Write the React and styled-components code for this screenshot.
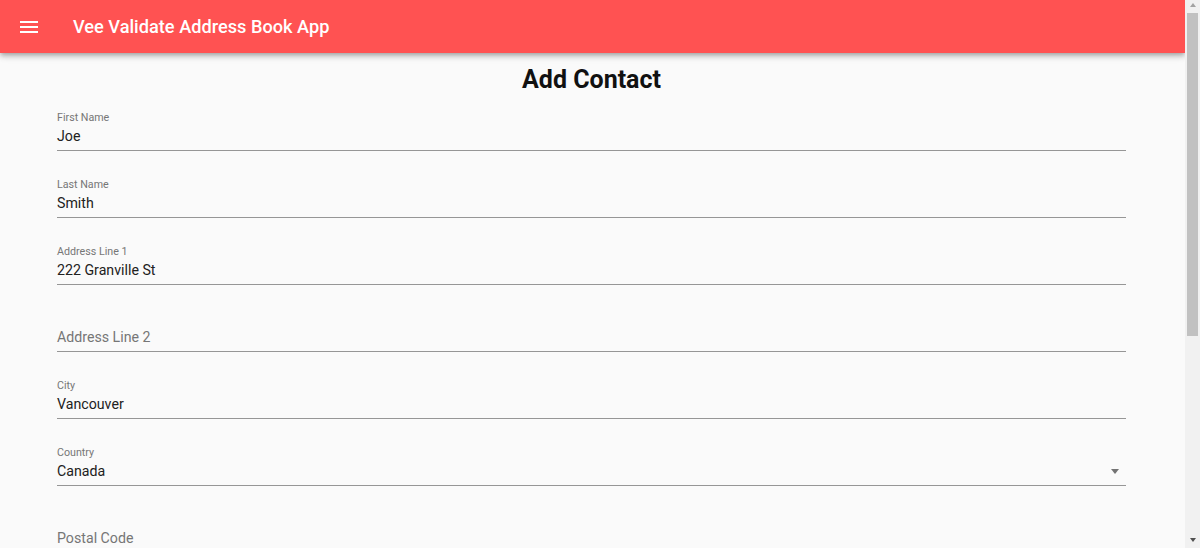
import React from "react";
import styled, { createGlobalStyle } from "styled-components";

const GlobalStyle = createGlobalStyle`
  html, body {
    margin: 0;
    padding: 0;
    background: #fafafa;
    overflow: hidden;
    font-family: Roboto, "Noto Sans", "Liberation Sans", sans-serif;
  }
  * { box-sizing: border-box; }
`;

const Window = styled.div`
  display: flex;
  height: 548px;
  overflow: hidden;
  background: #fafafa;
`;

const Content = styled.div`
  flex: 1;
  min-width: 0;
  overflow: hidden;
`;

/* ---------- scrollbar ---------- */
const Rail = styled.div`
  flex: none;
  width: 15px;
  display: flex;
  flex-direction: column;
  background: #f1f1f1;
`;

const RailButton = styled.div`
  flex: none;
  height: 13px;
  display: flex;
  justify-content: center;
  align-items: ${(p) => (p.$down ? "flex-end" : "flex-start")};
  padding: ${(p) => (p.$down ? "0 0 6px" : "3px 0 0")};
`;

const Arrow = styled.span`
  width: 0;
  height: 0;
  border-left: 3.5px solid transparent;
  border-right: 3.5px solid transparent;
  ${(p) =>
    p.$down
      ? `border-top: 4px solid ${p.$color};`
      : `border-bottom: 4px solid ${p.$color};`}
`;

const Track = styled.div`
  flex: 1;
  padding: 0 2px;
`;

const Thumb = styled.div`
  height: 323px;
  background: #c1c1c1;
`;

/* ---------- app bar ---------- */
const Toolbar = styled.header`
  position: relative;
  z-index: 2;
  height: 53px;
  display: flex;
  align-items: center;
  padding-left: 17px;
  background: #ff5252;
  color: #fff;
  box-shadow: 0 2px 4px -1px rgba(0, 0, 0, 0.2), 0 4px 5px 0 rgba(0, 0, 0, 0.14),
    0 1px 10px 0 rgba(0, 0, 0, 0.12);
`;

const NavIcon = styled.svg`
  width: 24px;
  height: 24px;
  flex: none;
  fill: #fff;
`;

const AppTitle = styled.div`
  margin-left: 32px;
  font-size: 18.2px;
  font-weight: 500;
  line-height: 24px;
`;

/* ---------- form ---------- */
const Main = styled.main`
  padding: 12px 59px 40px 57px;
`;

const Heading = styled.h1`
  margin: 0 0 16px;
  text-align: center;
  font-size: 25px;
  line-height: 30px;
  font-weight: 700;
  color: #111;
`;

const Form = styled.form`
  display: flex;
  flex-direction: column;
  gap: 27px;
`;

const Field = styled.div`
  display: flex;
  flex-direction: column;
  border-bottom: 1px solid #969696;
`;

const Label = styled.div`
  height: 14px;
  font-size: 10.7px;
  line-height: 14px;
  color: #767676;
  margin-bottom: 1px;
`;

const Value = styled.div`
  display: flex;
  align-items: center;
  justify-content: space-between;
  font-size: 14.2px;
  line-height: 20px;
  height: 20px;
  margin-bottom: 4px;
  color: ${(p) => (p.$placeholder ? "#767676" : "#212121")};
`;

const Caret = styled.span`
  width: 0;
  height: 0;
  margin-right: 7px;
  border-left: 4px solid transparent;
  border-right: 4px solid transparent;
  border-top: 5px solid #737373;
`;

function TextField({ label, value, select }) {
  const empty = !value;
  return (
    <Field>
      <Label>{empty ? "" : label}</Label>
      <Value $placeholder={empty}>
        <span>{empty ? label : value}</span>
        {select && <Caret />}
      </Value>
    </Field>
  );
}

const fields = [
  { label: "First Name", value: "Joe" },
  { label: "Last Name", value: "Smith" },
  { label: "Address Line 1", value: "222 Granville St" },
  { label: "Address Line 2", value: "" },
  { label: "City", value: "Vancouver" },
  { label: "Country", value: "Canada", select: true },
  { label: "Postal Code", value: "" },
  { label: "Phone", value: "" },
  { label: "Email", value: "" },
];

export default function App() {
  return (
    <>
      <GlobalStyle />
      <Window>
        <Content>
          <Toolbar>
            <NavIcon viewBox="0 0 24 24" aria-hidden="true">
              <path d="M3 18h18v-2H3v2zm0-5h18v-2H3v2zm0-7v2h18V6H3z" />
            </NavIcon>
            <AppTitle>Vee Validate Address Book App</AppTitle>
          </Toolbar>
          <Main>
            <Heading>Add Contact</Heading>
            <Form>
              {fields.map((f) => (
                <TextField key={f.label} {...f} />
              ))}
            </Form>
          </Main>
        </Content>
        <Rail aria-hidden="true">
          <RailButton>
            <Arrow $color="#a3a3a3" />
          </RailButton>
          <Track>
            <Thumb />
          </Track>
          <RailButton $down>
            <Arrow $down $color="#505050" />
          </RailButton>
        </Rail>
      </Window>
    </>
  );
}
